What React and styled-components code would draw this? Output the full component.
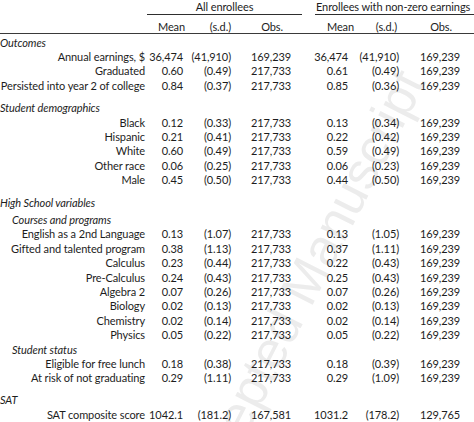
import styled, { createGlobalStyle } from "styled-components"

const GlobalStyle = createGlobalStyle`
    body {
        margin: 0;
        background: #ffffff;
    }
`

const Sheet = styled.div`
    position: relative;
    width: 474px;
    height: 422px;
    overflow: hidden;
    background: #ffffff;
    color: #1d1d1d;
    font-family: Lato, "Liberation Sans", sans-serif;
    font-size: 11px;
    letter-spacing: -0.1px;
`

const Watermark = styled.div`
    position: absolute;
    left: 300px;
    top: 290px;
    transform: translate(-50%, -50%) rotate(-63deg);
    font-family: "Liberation Sans", sans-serif;
    font-size: 52px;
    letter-spacing: 0;
    white-space: nowrap;
    color: #ececec;
    pointer-events: none;
`

const Table = styled.div`
    position: relative;
`

const COLS = "147px 39px 50px 66px 54px 48px 70px"

const Row = styled.div`
    display: grid;
    grid-template-columns: ${COLS};
    line-height: 14.4px;
    margin-top: ${p => p.$gap || 0}px;
`

const GroupRow = styled(Row)`
    line-height: 14px;
`

const GroupCell = styled.div`
    grid-column: ${p => p.$span};
    margin-left: ${p => p.$offset || 0}px;
    border-bottom: 1px solid #2e2e2e;
    display: flex;
    justify-content: ${p => p.$align || "center"};
    padding-left: ${p => p.$pad || 0}px;
    white-space: nowrap;
`

const HeadRow = styled(Row)`
    line-height: 13px;
    padding-top: 5px;
    border-bottom: 1px solid #3a3a3a;
    height: 13px;
`

const Label = styled.div`
    display: flex;
    justify-content: flex-end;
    padding-right: 2px;
    white-space: nowrap;
`

const Cell = styled.div`
    display: flex;
    justify-content: flex-end;
    padding-right: ${p => p.$pad}px;
    white-space: nowrap;
`

const Heading = styled.div`
    grid-column: 1 / -1;
    font-style: italic;
    padding-left: ${p => p.$indent || 0}px;
    white-space: nowrap;
`

const VALUE_PAD = [3, 5, 11, 8, 5, 14]
const HEAD_PAD = [1, 5, 19, 2, 7, 22]

const rows = [
    { h: "Outcomes", gap: 1.5 },
    { l: "Annual earnings, $", v: ["36,474", "(41,910)", "169,239", "36,474", "(41,910)", "169,239"] },
    { l: "Graduated", v: ["0.60", "(0.49)", "217,733", "0.61", "(0.49)", "169,239"] },
    { l: "Persisted into year 2 of college", v: ["0.84", "(0.37)", "217,733", "0.85", "(0.36)", "169,239"] },
    { h: "Student demographics", gap: 8 },
    { l: "Black", v: ["0.12", "(0.33)", "217,733", "0.13", "(0.34)", "169,239"] },
    { l: "Hispanic", v: ["0.21", "(0.41)", "217,733", "0.22", "(0.42)", "169,239"] },
    { l: "White", v: ["0.60", "(0.49)", "217,733", "0.59", "(0.49)", "169,239"] },
    { l: "Other race", v: ["0.06", "(0.25)", "217,733", "0.06", "(0.23)", "169,239"] },
    { l: "Male", v: ["0.45", "(0.50)", "217,733", "0.44", "(0.50)", "169,239"] },
    { h: "High School variables", gap: 8 },
    { h: "Courses and programs", indent: 12, gap: 3 },
    { l: "English as a 2nd Language", v: ["0.13", "(1.07)", "217,733", "0.13", "(1.05)", "169,239"] },
    { l: "Gifted and talented program", v: ["0.38", "(1.13)", "217,733", "0.37", "(1.11)", "169,239"] },
    { l: "Calculus", v: ["0.23", "(0.44)", "217,733", "0.22", "(0.43)", "169,239"] },
    { l: "Pre-Calculus", v: ["0.24", "(0.43)", "217,733", "0.25", "(0.43)", "169,239"] },
    { l: "Algebra 2", v: ["0.07", "(0.26)", "217,733", "0.07", "(0.26)", "169,239"] },
    { l: "Biology", v: ["0.02", "(0.13)", "217,733", "0.02", "(0.13)", "169,239"] },
    { l: "Chemistry", v: ["0.02", "(0.14)", "217,733", "0.02", "(0.14)", "169,239"] },
    { l: "Physics", v: ["0.05", "(0.22)", "217,733", "0.05", "(0.22)", "169,239"] },
    { h: "Student status", indent: 12 },
    { l: "Eligible for free lunch", v: ["0.18", "(0.38)", "217,733", "0.18", "(0.39)", "169,239"] },
    { l: "At risk of not graduating", v: ["0.29", "(1.11)", "217,733", "0.29", "(1.09)", "169,239"] },
    { h: "SAT", gap: 7.5 },
    { l: "SAT composite score", v: ["1042.1", "(181.2)", "167,581", "1031.2", "(178.2)", "129,765"] },
]

const heads = ["Mean", "(s.d.)", "Obs.", "Mean", "(s.d.)", "Obs."]

const App = () => {
    return (
        <Sheet>
            <GlobalStyle />
            <Watermark>Accepted Manuscript</Watermark>
            <Table>
                <GroupRow>
                    <div />
                    <GroupCell $span="2 / 5">All enrollees</GroupCell>
                    <GroupCell $span="5 / 8" $offset={13} $align="flex-start" $pad={1}>
                        Enrollees with non-zero earnings
                    </GroupCell>
                </GroupRow>
                <HeadRow>
                    <div />
                    {heads.map((t, i) => (
                        <Cell key={i} $pad={HEAD_PAD[i]}>{t}</Cell>
                    ))}
                </HeadRow>
                {rows.map((r, i) =>
                    r.h ? (
                        <Row key={i} $gap={r.gap}>
                            <Heading $indent={r.indent}>{r.h}</Heading>
                        </Row>
                    ) : (
                        <Row key={i} $gap={r.gap}>
                            <Label>{r.l}</Label>
                            {r.v.map((v, j) => (
                                <Cell key={j} $pad={VALUE_PAD[j]}>{v}</Cell>
                            ))}
                        </Row>
                    )
                )}
            </Table>
        </Sheet>
    )
}

export default App
